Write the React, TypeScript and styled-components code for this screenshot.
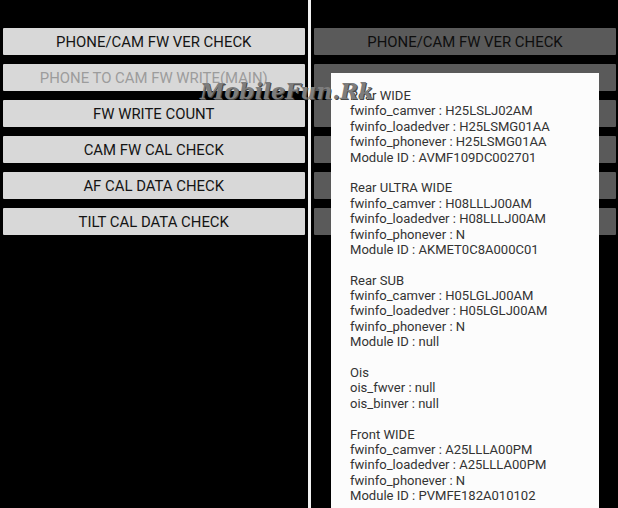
import React from 'react';
import styled, { createGlobalStyle } from 'styled-components';

const BUTTONS = [
    'PHONE/CAM FW VER CHECK',
    'PHONE TO CAM FW WRITE(MAIN)',
    'FW WRITE COUNT',
    'CAM FW CAL CHECK',
    'AF CAL DATA CHECK',
    'TILT CAL DATA CHECK',
];

const SECTIONS = [
    {
        title: 'Rear WIDE',
        lines: [
            'fwinfo_camver : H25LSLJ02AM',
            'fwinfo_loadedver : H25LSMG01AA',
            'fwinfo_phonever : H25LSMG01AA',
            'Module ID : AVMF109DC002701',
        ],
    },
    {
        title: 'Rear ULTRA WIDE',
        lines: [
            'fwinfo_camver : H08LLLJ00AM',
            'fwinfo_loadedver : H08LLLJ00AM',
            'fwinfo_phonever : N',
            'Module ID : AKMET0C8A000C01',
        ],
    },
    {
        title: 'Rear SUB',
        lines: [
            'fwinfo_camver : H05LGLJ00AM',
            'fwinfo_loadedver : H05LGLJ00AM',
            'fwinfo_phonever : N',
            'Module ID : null',
        ],
    },
    {
        title: 'Ois',
        lines: ['ois_fwver : null', 'ois_binver : null'],
    },
    {
        title: 'Front WIDE',
        lines: [
            'fwinfo_camver : A25LLLA00PM',
            'fwinfo_loadedver : A25LLLA00PM',
            'fwinfo_phonever : N',
            'Module ID : PVMFE182A010102',
        ],
    },
];

const App: React.FC = () => (
    <Screen>
        <GlobalStyle />
        <LeftPanel>
            <ButtonList>
                {BUTTONS.map((label, i) => (
                    <TestButton key={label} disabled={i === 1}>
                        {label}
                    </TestButton>
                ))}
            </ButtonList>
        </LeftPanel>
        <Divider />
        <RightPanel>
            <ButtonList>
                {BUTTONS.map((label, i) => (
                    <TestButton key={label} dimmed>
                        {i === 0 ? label : ''}
                    </TestButton>
                ))}
            </ButtonList>
            <Dialog>
                {SECTIONS.map((section) => (
                    <Section key={section.title}>
                        <div>{section.title}</div>
                        {section.lines.map((line) => (
                            <div key={line}>{line}</div>
                        ))}
                    </Section>
                ))}
            </Dialog>
        </RightPanel>
        <Watermark>MobileFun.Rk</Watermark>
    </Screen>
);

export default App;

const GlobalStyle = createGlobalStyle`
    html, body {
        margin: 0;
        padding: 0;
        background: #000000;
    }
`;
const Screen = styled.div`
    position: relative;
    display: flex;
    width: 618px;
    height: 508px;
    overflow: hidden;
    background: #000000;
    font-family: Roboto, 'Liberation Sans', sans-serif;
`;
const LeftPanel = styled.div`
    flex: none;
    width: 308px;
    box-sizing: border-box;
    padding: 28px 3.5px 0 3px;
`;
const RightPanel = styled.div`
    position: relative;
    flex: 1;
    padding: 28px 2px 0 3px;
`;
const Divider = styled.div`
    flex: none;
    width: 3px;
    background: #f2f2f2;
`;
const ButtonList = styled.div`
    display: flex;
    flex-direction: column;
    gap: 9px;
`;
const TestButton = styled.div<{ disabled?: boolean; dimmed?: boolean }>`
    display: flex;
    align-items: center;
    justify-content: center;
    height: 27px;
    padding-top: 1px;
    box-sizing: border-box;
    border-radius: 1px;
    font-size: 14.9px;
    background: ${({ dimmed }) => (dimmed ? '#5a5a5a' : '#d8d8d8')};
    color: ${({ disabled, dimmed }) => (dimmed ? '#0e0e0e' : disabled ? '#9c9c9c' : '#141414')};
`;
const Dialog = styled.div`
    position: absolute;
    top: 73px;
    left: 20px;
    width: 268px;
    height: 435px;
    box-sizing: border-box;
    padding: 15px 0 0 19px;
    display: flex;
    flex-direction: column;
    gap: 15.3px;
    overflow: hidden;
    background: #fcfcfc;
    color: #333333;
    font-size: 13.05px;
    line-height: 15.4px;
`;
const Section = styled.div`
    white-space: nowrap;
`;
const Watermark = styled.div`
    position: absolute;
    top: 78px;
    left: 200px;
    font-family: 'DejaVu Serif', serif;
    font-size: 22px;
    font-weight: bold;
    font-style: italic;
    color: #7d7d7d;
    text-shadow: 1px 1px 0 #4a4a4a;
`;
